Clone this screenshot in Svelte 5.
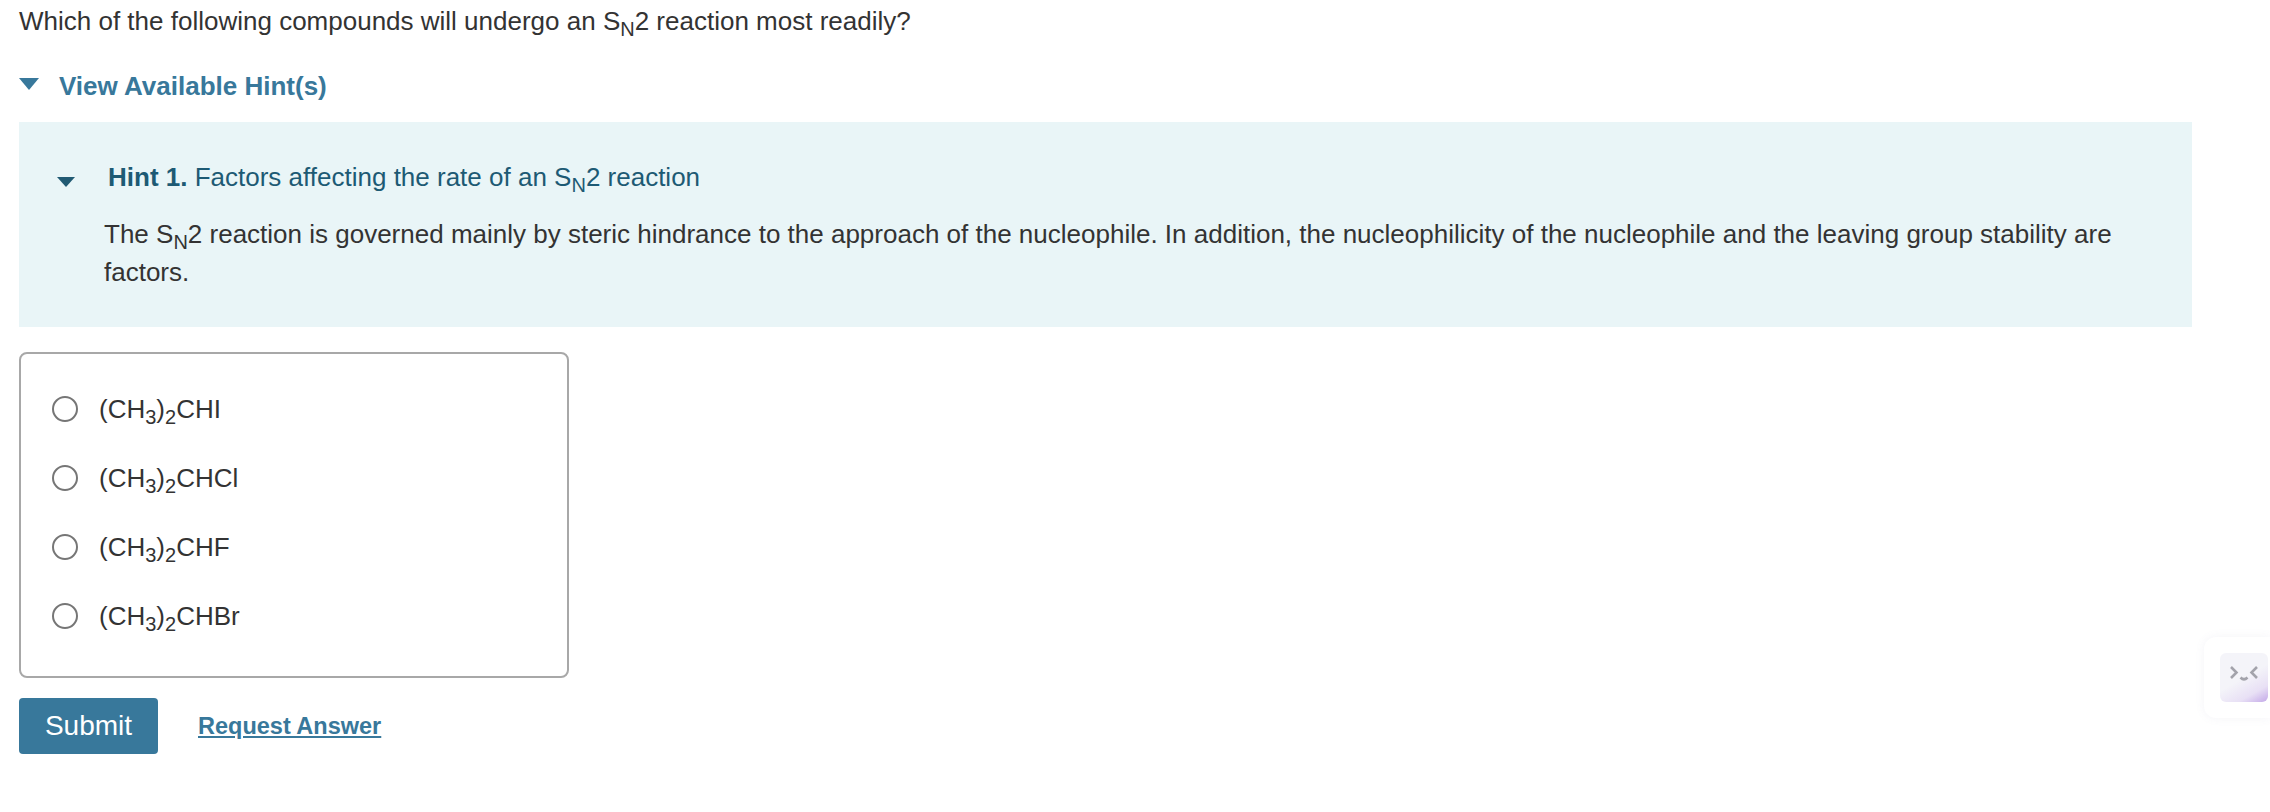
<script>
  const choices = ['CHI', 'CHCl', 'CHF', 'CHBr'];
</script>

<div class="page">
  <p class="question">Which of the following compounds will undergo an S<sub>N</sub>2 reaction most readily?</p>

  <div class="hints-toggle">
    <span class="tri"></span>
    <span>View Available Hint(s)</span>
  </div>

  <section class="hint-panel">
    <div class="hint-title">
      <span class="tri small"></span>
      <span><b>Hint 1.</b> Factors affecting the rate of an S<sub>N</sub>2 reaction</span>
    </div>
    <p class="hint-body">The S<sub>N</sub>2 reaction is governed mainly by steric hindrance to the approach of the nucleophile. In addition, the nucleophilicity of the nucleophile and the leaving group stability are factors.</p>
  </section>

  <div class="choices">
    {#each choices as c}
      <label class="choice">
        <input type="radio" name="answer" />
        <span>(CH<sub>3</sub>)<sub>2</sub>{c}</span>
      </label>
    {/each}
  </div>

  <div class="actions">
    <button class="submit">Submit</button>
    <span class="request">Request Answer</span>
  </div>
</div>

<div class="widget">
  <div class="face">
    <svg width="28" height="15" viewBox="0 0 28 15" fill="none" stroke="#a3a3ab" stroke-width="2.6">
      <path d="M1 1 L6.5 6.5 L1 12" />
      <path d="M27 1 L21.5 6.5 L27 12" />
      <path d="M10.5 11.5 Q14 15 17.5 11.5" />
    </svg>
  </div>
</div>

<style>
  :global(body) {
    margin: 0;
    background: #fff;
    font-family: "Liberation Sans", Arial, sans-serif;
    color: #333;
  }

  .page {
    width: 2173px;
    padding: 0 0 0 19px;
    font-size: 26px;
  }

  sub {
    font-size: 20px;
    line-height: 0;
    vertical-align: -6px;
  }

  .question {
    margin: 0;
    padding-top: 6px;
    line-height: 30px;
  }

  .hints-toggle {
    display: flex;
    align-items: center;
    gap: 20px;
    margin-top: 35px;
    height: 30px;
    color: #38789b;
    font-weight: 700;
  }

  .tri {
    width: 0;
    height: 0;
    border-left: 10px solid transparent;
    border-right: 10px solid transparent;
    border-top: 12px solid #38789b;
    margin-top: -4px;
  }

  .tri.small {
    border-left-width: 9.5px;
    border-right-width: 9.5px;
    border-top: 10px solid #215a73;
    margin: 9px 0 0;
  }

  .hint-panel {
    margin-top: 21px;
    height: 205px;
    box-sizing: border-box;
    padding: 40px 60px 0 38px;
    background: #e9f5f7;
  }

  .hint-title {
    display: flex;
    align-items: center;
    gap: 33px;
    color: #1d5a74;
    height: 30px;
  }

  .hint-body {
    margin: 23px 0 0 47px;
    line-height: 38px;
  }

  .choices {
    margin-top: 25px;
    width: 550px;
    height: 326px;
    box-sizing: border-box;
    border: 2px solid #a8a8a8;
    border-radius: 8px;
    padding: 30px 0 0 31px;
    display: flex;
    flex-direction: column;
    gap: 19px;
  }

  .choice {
    display: flex;
    align-items: center;
    gap: 21px;
    height: 50px;
  }

  .choice input {
    appearance: none;
    width: 26px;
    height: 26px;
    margin: 0;
    border: 2px solid #767676;
    border-radius: 50%;
    background: #fff;
  }

  .actions {
    margin-top: 20px;
    display: flex;
    align-items: center;
    gap: 40px;
  }

  .submit {
    width: 139px;
    height: 56px;
    border: none;
    border-radius: 4px;
    background: #38789b;
    color: #fff;
    font: inherit;
    font-size: 28px;
    padding: 0;
  }

  .request {
    color: #38789b;
    font-weight: 700;
    font-size: 23.5px;
    text-decoration: underline;
  }

  .widget {
    position: fixed;
    left: 2204px;
    top: 637px;
    width: 66px;
    height: 81px;
    box-sizing: border-box;
    padding: 16px 0 0 16px;
    background: #fff;
    border-radius: 12px 0 0 12px;
    box-shadow: 0 0 10px rgba(120, 120, 160, 0.08);
  }

  .face {
    width: 48px;
    height: 49px;
    border-radius: 6px;
    background: linear-gradient(150deg, #f4f4f9 50%, #e8e0f5 78%, #c3a8e8 100%);
    display: flex;
    align-items: center;
    justify-content: center;
  }

  .face svg {
    margin-bottom: 9px;
  }
</style>
